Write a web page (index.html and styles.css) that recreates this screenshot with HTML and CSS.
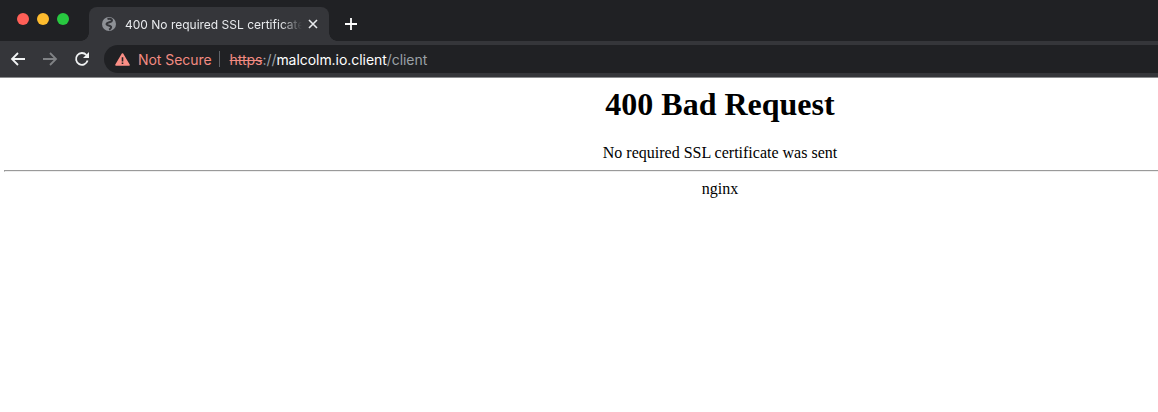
FILE: index.html
```html
<!DOCTYPE html>
<html lang="en">
<head>
<meta charset="utf-8">
<title>400 No required SSL certificate was sent</title>
<link rel="stylesheet" href="styles.css">
</head>
<body>
<header class="chrome">
  <div class="tabstrip">
    <div class="lights">
      <span class="light red"></span>
      <span class="light yellow"></span>
      <span class="light green"></span>
    </div>
    <div class="tab">
      <svg class="globe" width="16" height="16" viewBox="0 0 16 16">
        <circle cx="8" cy="8" r="7" fill="#8e9196"/>
        <path d="M6.5 3C9 2.4 11.2 3 11 4.6 10.8 6.5 6 6 5.5 8 5.2 9.6 9 9.4 10 10.6 10.6 11.6 9.5 13 8 13.6" stroke="#35363a" stroke-width="2" fill="none"/>
      </svg>
      <span class="tab-title">400 No required SSL certificate was sent</span>
      <svg class="tab-close" width="10" height="10" viewBox="0 0 10 10">
        <path d="M1 1 9 9M9 1 1 9" stroke="#e8eaed" stroke-width="1.6" fill="none"/>
      </svg>
    </div>
    <svg class="new-tab" width="14" height="14" viewBox="0 0 14 14">
      <path d="M7 1V13M1 7H13" stroke="#fff" stroke-width="1.8" fill="none"/>
    </svg>
  </div>
  <div class="toolbar">
    <svg class="nav" width="16" height="16" viewBox="0 0 16 16">
      <path d="M15 8H2.5M8 2 2 8 8 14" stroke="#f1f3f4" stroke-width="1.8" fill="none"/>
    </svg>
    <svg class="nav" width="16" height="16" viewBox="0 0 16 16">
      <path d="M1 8H14M8 2 14 8 8 14" stroke="#808285" stroke-width="1.8" fill="none"/>
    </svg>
    <svg class="nav" width="16" height="16" viewBox="0 0 16 16">
      <path d="M13.6 9.6A5.9 5.9 0 1 1 12.4 4" stroke="#f1f3f4" stroke-width="1.8" fill="none"/>
      <path d="M15 1V7H9Z" fill="#f1f3f4"/>
    </svg>
    <div class="omnibox">
      <svg class="warn" width="15" height="13" viewBox="0 0 15 13">
        <path d="M7.5 1 14 12H1Z" fill="#fb8f86" stroke="#fb8f86" stroke-width="1.6" stroke-linejoin="round"/>
        <path d="M6.7 4.2H8.3V8.4H6.7ZM6.7 9.4H8.3V11H6.7Z" fill="#202124"/>
      </svg>
      <span class="not-secure">Not Secure</span>
      <span class="sep"></span>
      <span class="url"><span class="scheme">https</span><span class="dim">://</span><span class="host">malcolm.io.client</span><span class="dim">/client</span></span>
    </div>
  </div>
</header>
<main class="page">
  <h1 class="heading">400 Bad Request</h1>
  <p class="message">No required SSL certificate was sent</p>
  <hr class="rule">
  <p class="server">nginx</p>
</main>
</body>
</html>
```
FILE: styles.css
```css
html, body {
  margin: 0;
  height: 100%;
  overflow: hidden;
  background: #fff;
}
.chrome {
  font-family: "Inter", "Liberation Sans", sans-serif;
  border-bottom: 1px solid #8a8b8d;
}
.tabstrip {
  height: 41px;
  background: #202124;
  display: flex;
  align-items: flex-end;
}
.lights {
  width: 89px;
  height: 41px;
  padding: 13px 0 0 17px;
  box-sizing: border-box;
  display: flex;
  gap: 8px;
  flex: none;
}
.light {
  width: 12px;
  height: 12px;
  border-radius: 50%;
}
.red { background: #ff5f57; }
.yellow { background: #febc2e; }
.green { background: #28c840; }
.tab {
  position: relative;
  width: 240px;
  height: 34px;
  background: #35363a;
  border-radius: 8px 8px 0 0;
  display: flex;
  align-items: center;
  padding: 0 11px 0 12px;
  box-sizing: border-box;
  flex: none;
}
.tab::before,
.tab::after {
  content: "";
  position: absolute;
  bottom: 0;
  width: 8px;
  height: 8px;
}
.tab::before {
  left: -8px;
  background: radial-gradient(circle at 0 0, transparent 7.5px, #35363a 8px);
}
.tab::after {
  right: -8px;
  background: radial-gradient(circle at 100% 0, transparent 7.5px, #35363a 8px);
}
.globe { flex: none; }
.tab-title {
  margin-left: 8px;
  font-size: 12px;
  color: #e8eaed;
  white-space: nowrap;
  overflow: hidden;
  flex: 1;
  -webkit-mask-image: linear-gradient(to right, #000 88%, transparent);
  mask-image: linear-gradient(to right, #000 88%, transparent);
}
.tab-close { margin-left: 6px; flex: none; }
.new-tab { margin: 0 0 10px 15px; flex: none; }
.toolbar {
  height: 36px;
  background: #35363a;
  display: flex;
  align-items: center;
  padding-left: 10px;
  gap: 16px;
}
.omnibox {
  flex: 1;
  height: 28px;
  margin-left: -2px;
  background: #202124;
  border-radius: 14px 0 0 14px;
  display: flex;
  align-items: center;
  padding-left: 11px;
  font-size: 14px;
  letter-spacing: -0.05px;
  white-space: nowrap;
}
.not-secure { margin-left: 8px; color: #f28b82; }
.sep {
  width: 1px;
  height: 16px;
  margin: 0 10px 0 7px;
  background: #5f6368;
}
.scheme {
  color: #f28b82;
  text-decoration: line-through;
}
.dim { color: #9aa0a6; }
.host { color: #fff; }
.page {
  width: 1432px;
  margin-left: 4px;
  font-family: "Liberation Serif", serif;
  font-size: 16px;
  color: #000;
  text-align: center;
}
.heading {
  font-size: 32px;
  line-height: 37px;
  margin: 8px 0 0;
}
.message { margin: 21px 0 0; line-height: 18px; }
.rule { margin: 8px 0 0; }
.server { margin: 8px 0 0; line-height: 18px; }
```
